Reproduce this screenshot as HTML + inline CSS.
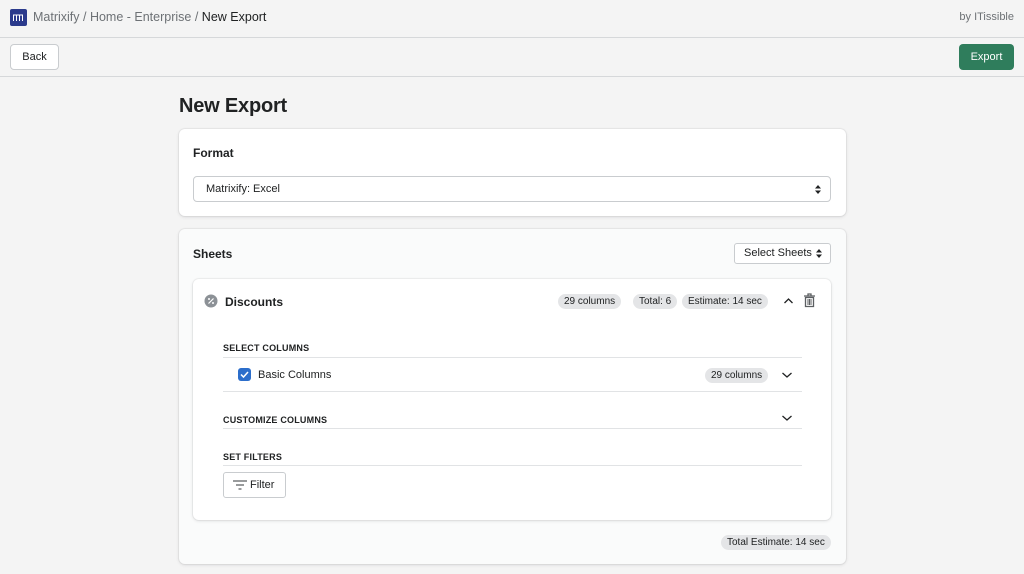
<!DOCTYPE html>
<html><head><style>
*{box-sizing:border-box;margin:0;padding:0}
body{width:1024px;height:574px;background:#f4f4f4;font-family:"Liberation Sans",sans-serif;color:#202223;position:relative;overflow:hidden;font-size:11px}
.a{position:absolute}
.pill{position:absolute;background:#e4e5e7;border-radius:10px;height:15px;line-height:15px;font-size:10px;padding:0 6px;color:#202223}
.hr{position:absolute;height:1px;background:#e1e3e5}
.cap{position:absolute;font-size:9px;font-weight:bold;letter-spacing:.2px}
</style></head><body>
<div class="a" style="left:10px;top:9px;width:17px;height:17px;background:#2b3a8c;border-radius:2px"><svg width="17" height="17"><path d="M3.5 12V6h3v6M6.5 6h3v6M9.5 6h3v6" stroke="#fff" fill="none" stroke-width="1"/></svg></div>
<div class="a" style="left:33px;top:10px;font-size:12.5px;color:#6d7175">Matrixify / Home - Enterprise / <span style="color:#202223">New Export</span></div>
<div class="a" style="right:10px;top:11px;font-size:11px;color:#6d7175">by ITissible</div>
<div class="hr" style="left:0;top:37px;width:1024px;background:#d6d8da"></div>
<div class="a" style="left:10px;top:44px;width:49px;height:26px;background:#fff;border:1px solid #c9cccf;border-radius:4px;text-align:center;line-height:24px;font-size:11px">Back</div>
<div class="a" style="left:959px;top:44px;width:55px;height:26px;background:#2f7d5c;border-radius:4px;text-align:center;line-height:26px;font-size:11px;color:#fff">Export</div>
<div class="hr" style="left:0;top:76px;width:1024px;background:#d6d8da"></div>
<div class="a" style="left:179px;top:95px;font-size:20px;font-weight:bold;letter-spacing:-.2px">New Export</div>
<div class="a" style="left:179px;top:129px;width:667px;height:87px;background:#fff;border-radius:6px;box-shadow:0 0 0 1px rgba(63,63,68,.05),0 1px 3px rgba(63,63,68,.15)"></div>
<div class="a" style="left:193px;top:146px;font-size:12px;font-weight:bold">Format</div>
<div class="a" style="left:193px;top:176px;width:638px;height:26px;border:1px solid #c9cccf;border-radius:4px;background:#fff;padding-left:12px;line-height:24px;font-size:11px">Matrixify: Excel<svg style="position:absolute;right:9px;top:8px" width="6" height="9"><path d="M0 3.5L3 0 6 3.5zM0 5.5L3 9 6 5.5z" fill="#202223"/></svg></div>
<div class="a" style="left:179px;top:229px;width:667px;height:335px;background:#fafbfb;border-radius:6px;box-shadow:0 0 0 1px rgba(63,63,68,.05),0 1px 3px rgba(63,63,68,.15)"></div>
<div class="a" style="left:193px;top:247px;font-size:12px;font-weight:bold">Sheets</div>
<div class="a" style="left:734px;top:243px;width:97px;height:21px;border:1px solid #c9cccf;border-radius:3px;background:#fff;padding-left:9px;line-height:19px;font-size:11px">Select Sheets<svg style="position:absolute;right:8px;top:5px" width="6" height="9"><path d="M0 3.5L3 0 6 3.5zM0 5.5L3 9 6 5.5z" fill="#202223"/></svg></div>
<div class="a" style="left:193px;top:279px;width:638px;height:241px;background:#fff;border-radius:6px;box-shadow:0 0 0 1px rgba(63,63,68,.05),0 1px 3px rgba(63,63,68,.15)"></div>
<svg class="a" style="left:204px;top:294px" width="14" height="14"><circle cx="7" cy="7" r="6.5" fill="#8c9196"/><path d="M4.5 9.5l5-5" stroke="#fff" stroke-width="1.2"/><circle cx="5" cy="5" r="1" fill="#fff"/><circle cx="9" cy="9" r="1" fill="#fff"/></svg>
<div class="a" style="left:225px;top:295px;font-size:12px;font-weight:bold">Discounts</div>
<div class="pill" style="left:558px;top:294px">29 columns</div>
<div class="pill" style="left:633px;top:294px">Total: 6</div>
<div class="pill" style="left:682px;top:294px">Estimate: 14 sec</div>
<svg class="a" style="left:783px;top:296px" width="11" height="10"><path d="M1.5 7l4-4 4 4" stroke="#202223" fill="none" stroke-width="1.3"/></svg>
<svg class="a" style="left:803px;top:292px" width="13" height="16"><path d="M1 4h11M5 4V2h3v2M2.5 5.5h8v9h-8z" stroke="#5c5f62" fill="none" stroke-width="1.3"/><path d="M5 7v6M6.5 7v6M8 7v6" stroke="#5c5f62"/></svg>
<div class="cap" style="left:223px;top:343px">SELECT COLUMNS</div>
<div class="hr" style="left:223px;top:357px;width:579px"></div>
<div class="a" style="left:238px;top:368px;width:13px;height:13px;background:#2c6ecb;border-radius:3px"><svg width="13" height="13"><path d="M3 6.5l2.5 2.5 4.5-5" stroke="#fff" fill="none" stroke-width="1.5"/></svg></div>
<div class="a" style="left:258px;top:369px;font-size:11px">Basic Columns</div>
<div class="pill" style="left:705px;top:368px">29 columns</div>
<svg class="a" style="left:781px;top:370px" width="12" height="10"><path d="M1.5 3l4.5 4 4.5-4" stroke="#202223" fill="none" stroke-width="1.3"/></svg>
<div class="hr" style="left:223px;top:391px;width:579px"></div>
<div class="cap" style="left:223px;top:415px">CUSTOMIZE COLUMNS</div>
<svg class="a" style="left:781px;top:413px" width="12" height="10"><path d="M1.5 3l4.5 4 4.5-4" stroke="#202223" fill="none" stroke-width="1.3"/></svg>
<div class="hr" style="left:223px;top:428px;width:579px"></div>
<div class="cap" style="left:223px;top:452px">SET FILTERS</div>
<div class="hr" style="left:223px;top:465px;width:579px"></div>
<div class="a" style="left:223px;top:472px;width:63px;height:26px;border:1px solid #c9cccf;border-radius:3px;background:#fff;font-size:11px;line-height:24px;padding-left:26px">Filter<svg style="position:absolute;left:9px;top:7px" width="14" height="10"><path d="M0 1h14M3 5h8M5.5 9h3" stroke="#5c5f62" stroke-width="1.3"/></svg></div>
<div class="pill" style="left:721px;top:535px;height:15px">Total Estimate: 14 sec</div>
</body></html>
